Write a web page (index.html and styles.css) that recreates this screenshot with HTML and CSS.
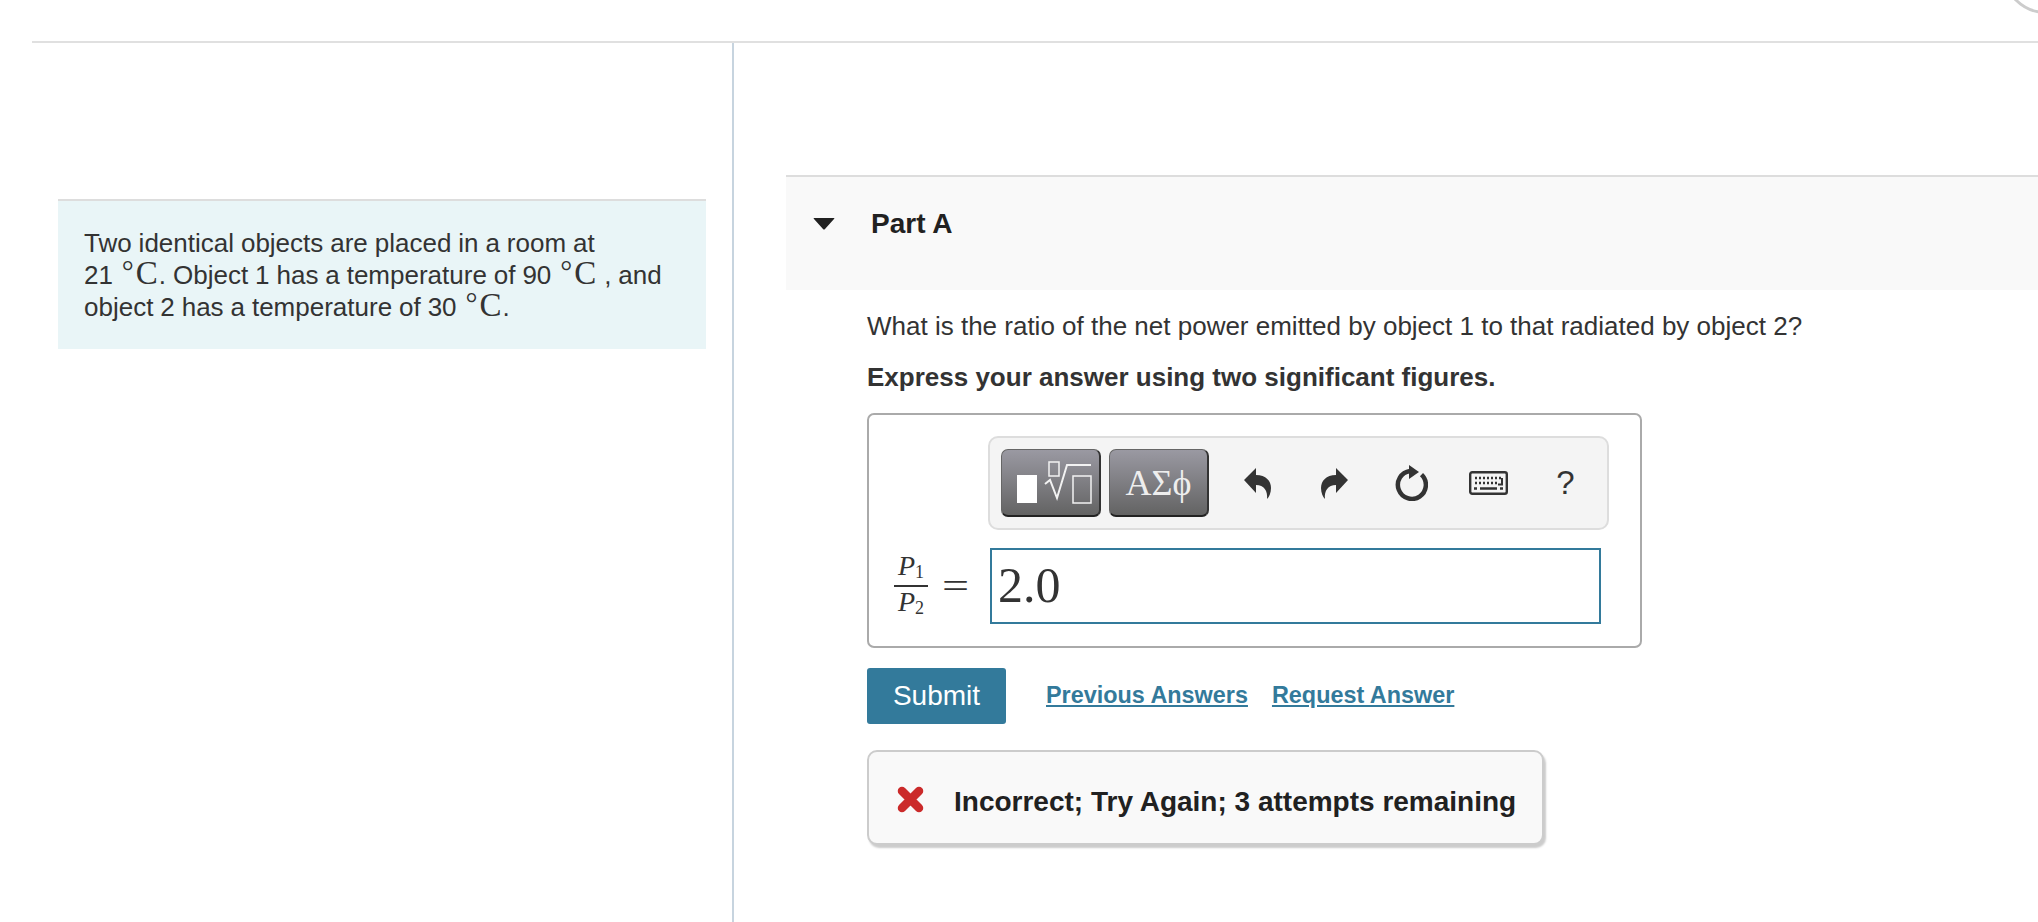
FILE: index.html
```html
<!DOCTYPE html>
<html lang="en">
<head>
<meta charset="utf-8">
<title>Part A</title>
<link rel="stylesheet" href="styles.css">
</head>
<body>
<div class="corner-circle"></div>
<header class="top-rule"></header>
<main class="columns">
  <aside class="left-col">
    <div class="intro">
      <p class="intro-text">Two identical objects are placed in a room at<br>21 <span class="deg">°</span><span class="mathc">C</span>. Object 1 has a temperature of 90 <span class="deg">°</span><span class="mathc">C</span> , and<br>object 2 has a temperature of 30 <span class="deg">°</span><span class="mathc">C</span>.</p>
    </div>
  </aside>
  <section class="right-col">
    <div class="part-head">
      <svg class="caret" width="22" height="12" viewBox="0 0 22 12"><path d="M1 0H21Q22 0 21 1L12 11Q11 12 10 11L1 1Q0 0 1 0Z" fill="#212121"/></svg>
      <h2 class="part-title">Part A</h2>
    </div>
    <div class="part-body">
      <p class="question">What is the ratio of the net power emitted by object 1 to that radiated by object 2?</p>
      <p class="instruction">Express your answer using two significant figures.</p>
      <div class="answer-box">
        <div class="toolbar">
          <div class="tool-btn">
            <svg width="100" height="68" viewBox="0 0 100 68" fill="none" stroke="#f2f2f2" stroke-width="1.5">
              <rect x="16" y="26" width="20" height="28" fill="#fff" stroke="none"/>
              <rect x="48" y="13" width="10" height="14"/>
              <path d="M44 35L49 31L56 49L66 16H90" stroke-width="2"/>
              <rect x="72" y="27" width="18" height="27"/>
            </svg>
          </div>
          <div class="tool-btn greek">ΑΣϕ</div>
          <div class="tool-slot first-slot">
            <svg width="27" height="31" viewBox="0 0 27 31"><path d="M0 12L12 0V7C22 7 27 13 27 20C27 25 25 29 23 31C24 23 20 17 12 17V25Z" fill="#333"/></svg>
          </div>
          <div class="tool-slot">
            <svg class="mirror" width="27" height="31" viewBox="0 0 27 31"><path d="M0 12L12 0V7C22 7 27 13 27 20C27 25 25 29 23 31C24 23 20 17 12 17V25Z" fill="#333"/></svg>
          </div>
          <div class="tool-slot">
            <svg width="33" height="36" viewBox="0 0 33 36"><path d="M15 6A14 14 0 1 0 26.5 9.7" fill="none" stroke="#333" stroke-width="4.5"/><path d="M14 0L24 7L14 14Z" fill="#333"/></svg>
          </div>
          <div class="tool-slot">
            <svg width="39" height="24" viewBox="0 0 39 24">
              <rect x="1.2" y="1.2" width="36.6" height="21.6" rx="2" fill="#f4f4f4" stroke="#333" stroke-width="2.4"/>
              <path d="M6 7H33M6 12H28" stroke="#333" stroke-width="2.4" stroke-dasharray="2 2"/>
              <path d="M33 7V13.5H29" fill="none" stroke="#333" stroke-width="2"/>
              <path d="M5 17.5H8M11 17.5H28M31 17.5H34" stroke="#333" stroke-width="2.4"/>
            </svg>
          </div>
          <div class="tool-slot help">?</div>
        </div>
        <div class="equation">
          <div class="fraction">
            <span class="frac-num"><i>P</i><sub>1</sub></span>
            <span class="frac-den"><i>P</i><sub>2</sub></span>
          </div>
          <span class="equals">=</span>
          <div class="math-input">2.0</div>
        </div>
      </div>
      <div class="actions">
        <button class="submit" type="button">Submit</button>
        <a class="link first-link" href="#">Previous Answers</a>
        <a class="link" href="#">Request Answer</a>
      </div>
      <div class="feedback">
        <svg class="x-icon" width="27" height="27" viewBox="0 0 27 27"><path d="M5 5L22 22M22 5L5 22" stroke="#cb2a2a" stroke-width="8.5" stroke-linecap="round"/></svg>
        <span class="feedback-text">Incorrect; Try Again; 3 attempts remaining</span>
      </div>
    </div>
  </section>
</main>
</body>
</html>
```
FILE: styles.css
```css
* { box-sizing: border-box; }
html, body { margin: 0; height: 922px; overflow: hidden; background: #fff; }
body { font-family: "Liberation Sans", Arial, sans-serif; color: #333; position: relative; }
p, h2 { margin: 0; }

.corner-circle { position: absolute; left: 2002px; top: -74px; width: 88px; height: 88px; border: 3px solid #ccc; border-radius: 50%; }

.top-rule { height: 43px; margin-left: 32px; border-bottom: 2px solid #e0e0e0; }

.columns { display: grid; grid-template-columns: 734px 1fr; height: 879px; }
.left-col { border-right: 2px solid #c7d4df; padding: 156px 26px 0 58px; }
.intro { background: #e9f5f7; border-top: 2px solid #ddd; height: 150px; padding: 26px 0 0 26px; }
.intro-text { font-size: 26px; line-height: 32px; white-space: nowrap; word-spacing: -0.3px; }
.deg { font-family: "Liberation Serif", serif; font-size: 30px; line-height: 0; position: relative; top: -3px; margin-left: 2px; margin-right: 2px; }
.mathc { font-family: "Liberation Serif", serif; font-size: 33px; line-height: 0; margin-right: 1px; }

.right-col { padding-top: 132px; }
.part-head { margin-left: 52px; height: 115px; background: #f9f9f9; border-top: 2px solid #ddd; display: flex; align-items: flex-start; padding: 41px 0 0 27px; }
.caret { flex: none; }
.part-title { font-size: 28px; line-height: 32px; font-weight: 700; color: #212121; margin: -10px 0 0 36px; }

.part-body { margin-left: 133px; }
.question { font-size: 26px; line-height: 32px; margin-top: 20px; white-space: nowrap; }
.instruction { font-size: 26px; line-height: 32px; font-weight: 700; margin-top: 19px; white-space: nowrap; }

.answer-box { width: 775px; height: 235px; margin-top: 20px; border: 2px solid #aaa; border-radius: 7px; padding: 21px 0 0 0; }
.toolbar { margin-left: 119px; width: 621px; height: 94px; background: #f4f4f4; border: 2px solid #ddd; border-radius: 10px; display: flex; align-items: center; padding-left: 11px; }
.tool-btn { width: 100px; height: 68px; margin-right: 8px; border-radius: 7px; background: linear-gradient(#9a99a2, #636363); border: 1px solid #666; border-bottom: 2px solid #222; border-right: 2px solid #333; display: flex; align-items: center; justify-content: center; flex: none; overflow: hidden; }
.tool-btn svg { flex: none; }
.greek { font-family: "Liberation Serif", serif; font-size: 36px; color: #eee; }
.tool-slot { width: 77px; height: 40px; display: flex; align-items: center; justify-content: center; flex: none; }
.first-slot { margin-left: 2px; }
.mirror { transform: scaleX(-1); }
.help { font-size: 33px; color: #333; }

.equation { display: flex; align-items: center; margin-top: 18px; padding-left: 25px; }
.fraction { width: 34px; display: flex; flex-direction: column; align-items: center; font-family: "Liberation Serif", serif; font-size: 28px; }
.frac-num { border-bottom: 2px solid #333; width: 100%; text-align: center; height: 34px; line-height: 25px; white-space: nowrap; }
.frac-den { height: 32px; line-height: 29px; white-space: nowrap; }
.fraction sub { font-size: 18px; line-height: 0; vertical-align: -3px; }
.equals { font-family: "Liberation Serif", serif; font-size: 48px; line-height: 40px; margin: 0 21px 0 14px; width: 27px; text-align: center; transform: scaleY(0.75); }
.math-input { width: 611px; height: 76px; border: 2px solid #337a9b; font-family: "Liberation Serif", serif; font-size: 50px; line-height: 70px; padding-left: 6px; }

.actions { display: flex; align-items: center; margin-top: 20px; height: 56px; }
.submit { width: 139px; height: 56px; background: #337a9b; color: #fff; border: 0; border-radius: 3px; font: 28px "Liberation Sans", Arial, sans-serif; padding: 0; }
.link { font-size: 23.4px; font-weight: 700; color: #337a9b; text-decoration: underline; margin-top: -1px; margin-left: 24px; }
.first-link { margin-left: 40px; }

.feedback { width: 677px; height: 95px; margin-top: 26px; background: #f9f9f9; border: 2px solid #ccc; border-radius: 10px; box-shadow: 2px 3px 2px #ccc; display: flex; align-items: center; padding-left: 28px; }
.x-icon { flex: none; margin-top: 3px; }
.feedback-text { font-size: 28px; font-weight: 700; color: #212121; margin: 8px 0 0 30px; white-space: nowrap; }
```
